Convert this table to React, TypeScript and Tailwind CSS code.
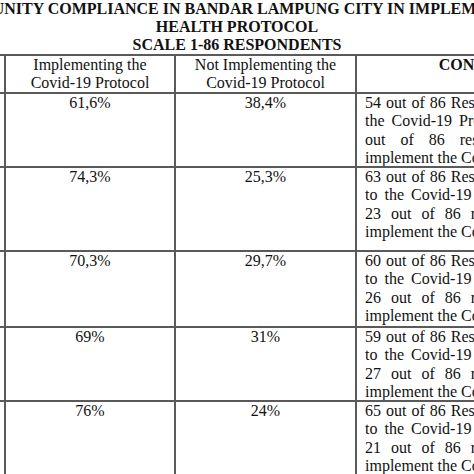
type Line = { text: string; sp: string };

type Row = {
  label: string;
  yes: string;
  no: string;
  h: string;
  lines: Line[];
};

const rows: Row[] = [
  {
    label: "Week 1",
    yes: "61,6%",
    no: "38,4%",
    h: "h-[72px]",
    lines: [
      { text: "54 out of 86 Respondents implemented", sp: "[word-spacing:1px]" },
      { text: "the Covid-19 Protocol, while 32", sp: "[word-spacing:3px]" },
      { text: "out of 86 respondents did not", sp: "[word-spacing:11px]" },
      { text: "implement the Covid-19 Protocol", sp: "[word-spacing:0px]" },
    ],
  },
  {
    label: "Week 2",
    yes: "74,3%",
    no: "25,3%",
    h: "h-[82px]",
    lines: [
      { text: "63 out of 86 Respondents complied", sp: "[word-spacing:1px]" },
      { text: "to the Covid-19 Protocol, while", sp: "[word-spacing:3px]" },
      { text: "23 out of 86 respondents did not", sp: "[word-spacing:6px]" },
      { text: "implement the Covid-19 Protocol", sp: "[word-spacing:0px]" },
    ],
  },
  {
    label: "Week 3",
    yes: "70,3%",
    no: "29,7%",
    h: "h-[74px]",
    lines: [
      { text: "60 out of 86 Respondents complied", sp: "[word-spacing:1px]" },
      { text: "to the Covid-19 Protocol, while", sp: "[word-spacing:3px]" },
      { text: "26 out of 86 respondents did not", sp: "[word-spacing:6px]" },
      { text: "implement the Covid-19 Protocol", sp: "[word-spacing:0px]" },
    ],
  },
  {
    label: "Week 4",
    yes: "69%",
    no: "31%",
    h: "h-[72px]",
    lines: [
      { text: "59 out of 86 Respondents complied", sp: "[word-spacing:1px]" },
      { text: "to the Covid-19 Protocol, while", sp: "[word-spacing:3px]" },
      { text: "27 out of 86 respondents did not", sp: "[word-spacing:6px]" },
      { text: "implement the Covid-19 Protocol", sp: "[word-spacing:0px]" },
    ],
  },
  {
    label: "Week 5",
    yes: "76%",
    no: "24%",
    h: "h-[80px]",
    lines: [
      { text: "65 out of 86 Respondents complied", sp: "[word-spacing:1px]" },
      { text: "to the Covid-19 Protocol, while", sp: "[word-spacing:3px]" },
      { text: "21 out of 86 respondents did not", sp: "[word-spacing:6px]" },
      { text: "implement the Covid-19 Protocol", sp: "[word-spacing:0px]" },
    ],
  },
];

export default function App() {
  return (
    <div className="w-[474px] h-[474px] overflow-hidden bg-white text-[#111] font-['Liberation_Serif','Times_New_Roman',serif]">
      {/* title, centred on the page; the first line runs past both edges */}
      <div className="w-[1000px] ml-[-263px] text-center font-bold text-[16px] leading-[18px] whitespace-nowrap">
        <div className="pl-[4px]">COMMUNITY COMPLIANCE IN BANDAR LAMPUNG CITY IN IMPLEMENTING</div>
        <div>HEALTH PROTOCOL</div>
        <div>SCALE 1-86 RESPONDENTS</div>
      </div>

      <div className="ml-[-100px] w-[730px] border-t-2 border-[#5a5a5a] text-[16px] leading-[18.4px]">
        {/* header row */}
        <div className="flex h-[38px] border-b-2 border-[#5a5a5a]">
          <div className="w-[104px] shrink-0 text-center font-bold">Period</div>
          <div className="w-[170px] shrink-0 border-l-2 border-[#5a5a5a] text-center">
            Implementing the
            <br />
            Covid-19 Protocol
          </div>
          <div className="w-[181px] shrink-0 border-l-2 border-[#5a5a5a] text-center">
            Not Implementing the
            <br />
            Covid-19 Protocol
          </div>
          <div className="w-[274px] shrink-0 border-l-2 border-[#5a5a5a] text-center font-bold">
            CONCLUSION
          </div>
        </div>

        {rows.map((r) => (
          <div key={r.label} className={`flex border-b-2 border-[#5a5a5a] box-content ${r.h}`}>
            <div className="w-[104px] shrink-0 text-center">{r.label}</div>
            <div className="w-[170px] shrink-0 border-l-2 border-[#5a5a5a] text-center">{r.yes}</div>
            <div className="w-[181px] shrink-0 border-l-2 border-[#5a5a5a] text-center">{r.no}</div>
            <div className="w-[274px] shrink-0 border-l-2 border-[#5a5a5a] pl-[8px] pr-[6px] whitespace-nowrap overflow-hidden">
              {r.lines.map((l, i) => (
                <div key={i} className={l.sp}>
                  {l.text}
                </div>
              ))}
            </div>
          </div>
        ))}
      </div>
    </div>
  );
}
